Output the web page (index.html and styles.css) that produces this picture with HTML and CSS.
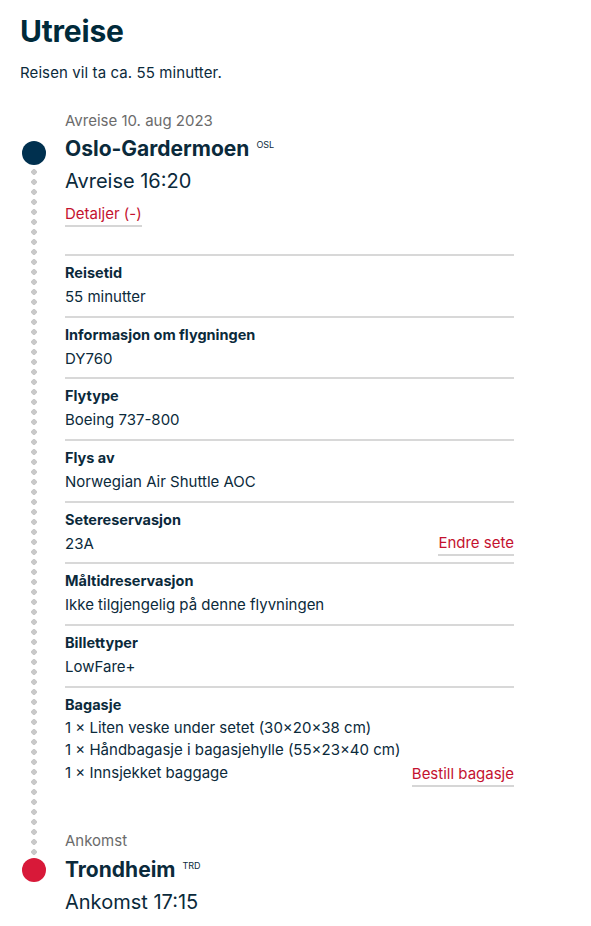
FILE: index.html
```html
<!DOCTYPE html>
<html lang="no">
<head>
<meta charset="utf-8">
<title>Utreise</title>
<link rel="stylesheet" href="styles.css">
</head>
<body>
<main class="page">
  <h1 class="title">Utreise</h1>
  <p class="intro">Reisen vil ta ca. 55 minutter.</p>

  <section class="timeline">
    <div class="rail">
      <div class="rail-top"></div>
      <div class="stop stop-dep"></div>
      <div class="dots"></div>
      <div class="stop stop-arr"></div>
      <div class="rail-bottom"></div>
    </div>

    <div class="content">
      <div class="leg">
        <div class="meta">Avreise 10. aug 2023</div>
        <div class="place">Oslo-Gardermoen <sup class="code">OSL</sup></div>
        <div class="time">Avreise 16:20</div>
        <a class="link toggle" href="#">Detaljer (-)</a>
      </div>

      <div class="details">
        <div class="row">
          <div class="label">Reisetid</div>
          <div class="value">55 minutter</div>
        </div>
        <div class="row">
          <div class="label">Informasjon om flygningen</div>
          <div class="value">DY760</div>
        </div>
        <div class="row">
          <div class="label">Flytype</div>
          <div class="value">Boeing 737-800</div>
        </div>
        <div class="row">
          <div class="label">Flys av</div>
          <div class="value">Norwegian Air Shuttle AOC</div>
        </div>
        <div class="row">
          <div class="label">Setereservasjon</div>
          <div class="value split"><span>23A</span><a class="link" href="#">Endre sete</a></div>
        </div>
        <div class="row">
          <div class="label">Måltidreservasjon</div>
          <div class="value">Ikke tilgjengelig på denne flyvningen</div>
        </div>
        <div class="row">
          <div class="label">Billettyper</div>
          <div class="value">LowFare+</div>
        </div>
        <div class="row row-last">
          <div class="label">Bagasje</div>
          <div class="value multi">1 × Liten veske under setet (30×20×38 cm)</div>
          <div class="value multi">1 × Håndbagasje i bagasjehylle (55×23×40 cm)</div>
          <div class="value multi split"><span>1 × Innsjekket baggage</span><a class="link" href="#">Bestill bagasje</a></div>
        </div>
      </div>

      <div class="leg leg-arr">
        <div class="meta">Ankomst</div>
        <div class="place">Trondheim <sup class="code">TRD</sup></div>
        <div class="time">Ankomst 17:15</div>
      </div>
    </div>
  </section>
</main>
</body>
</html>
```

FILE: styles.css
```css
* { box-sizing: border-box; }

html, body {
  margin: 0;
  padding: 0;
  background: #ffffff;
}

body {
  font-family: "Inter", "Open Sans", "Liberation Sans", sans-serif;
  color: #0b2a3b;
  font-size: 15px;
}

.page {
  padding: 11px 20px 0 20px;
  width: 534px;
}

.title {
  margin: 0;
  font-size: 30px;
  line-height: 40px;
  font-weight: 700;
  color: #002a3a;
  letter-spacing: -0.2px;
}

.intro {
  margin: 11px 0 0 0;
  font-size: 15px;
  line-height: 22px;
  letter-spacing: 0.1px;
}

.timeline {
  display: flex;
  gap: 17px;
  margin-top: 26px;
}

.rail {
  width: 28px;
  flex: 0 0 28px;
  display: flex;
  flex-direction: column;
  align-items: center;
}

.rail-top { height: 31px; }
.rail-bottom { height: 36px; }

.stop {
  width: 24px;
  height: 24px;
  border-radius: 50%;
  flex: 0 0 24px;
}

.stop-dep { background: #00304f; }
.stop-arr { background: #d81939; }

.dots {
  flex: 1 1 auto;
  width: 6px;
  margin: 2px 0;
  background-image: radial-gradient(circle at 3px 5px, #c9c9c9 2.6px, transparent 3px);
  background-size: 6px 10px;
  background-repeat: repeat-y;
}

.content {
  flex: 1 1 auto;
  display: flex;
  flex-direction: column;
}

.meta {
  color: #6b6b6b;
  font-size: 15px;
  line-height: 22px;
  margin-bottom: 1px;
}

.place {
  font-size: 21px;
  line-height: 32px;
  font-weight: 700;
}

.code {
  font-size: 9px;
  font-weight: 400;
  vertical-align: top;
  position: relative;
  top: -4px;
  margin-left: 2px;
}

.time {
  font-size: 20px;
  line-height: 32px;
}

.link {
  color: #c4122f;
  text-decoration: none;
  border-bottom: 2px solid #d6d6d6;
  font-size: 15px;
  line-height: 20px;
}

.toggle {
  align-self: flex-start;
  display: inline-block;
  margin-top: 7px;
  padding-bottom: 1px;
}

.leg { display: flex; flex-direction: column; }

.details {
  margin-top: 27px;
  width: 449px;
}

.row {
  border-top: 2px solid #d8d8d8;
  padding: 5px 0 6.7px 0;
}

.label {
  font-weight: 700;
  font-size: 14.5px;
  line-height: 23px;
}

.value {
  font-size: 15px;
  line-height: 25px;
}

.split {
  display: flex;
  justify-content: space-between;
  align-items: flex-start;
}

.split .link { line-height: 23px; }

.multi { line-height: 22.5px; }

.row-last { padding-bottom: 0; }

.row-last .label { margin-bottom: 1px; }

.leg-arr { margin-top: 43px; }

.leg-arr .meta { margin-bottom: 2px; }
```
